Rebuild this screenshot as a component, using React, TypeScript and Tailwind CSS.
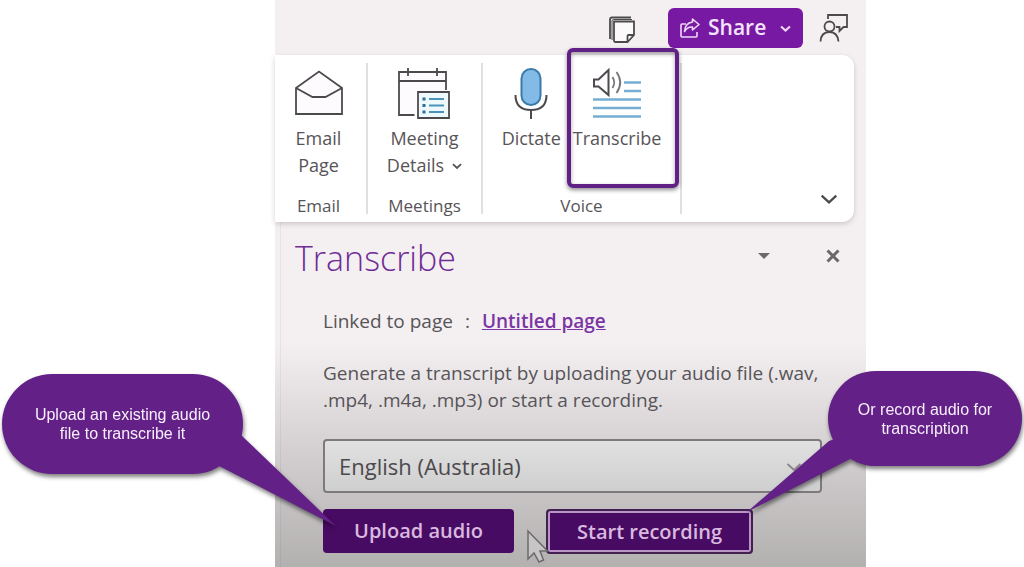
import type { ReactNode } from "react";

function NotesIcon() {
  return (
    <svg width="28" height="28" viewBox="0 0 28 28" fill="none" stroke="#4d4a4d" strokeWidth="1.8">
      <path d="M2 23V3.500Q2 1.500 4 1.500H23" />
      <path d="M4 24V5Q4 3.500 5.500 3.500H24" strokeWidth="1" />
      <path d="M6 5.500H26V19L19.500 26H7.500Q6 26 6 24.500Z" fill="#fbfafb" />
      <path d="M26 19H20.500Q19.500 19 19.500 20V26" />
    </svg>
  );
}

function ShareIcon() {
  return (
    <svg width="20" height="22" viewBox="0 0 20 22" fill="none" stroke="#f0d8f8" strokeWidth="1.6" strokeLinejoin="round">
      <path d="M6 7H2Q1 7 1 8V19Q1 20 2 20H16Q17 20 17 19V15" />
      <path d="M12.500 2L19 7.500L12.500 13V10Q7.500 9.500 4.500 14.500Q5 6 12.500 5Z" />
    </svg>
  );
}

function PersonChatIcon() {
  return (
    <svg width="30" height="30" viewBox="0 0 30 30" fill="none" stroke="#4d4a4d" strokeWidth="1.8">
      <path d="M9 6V2H28V14H24.500L20.500 18V14H17" />
      <circle cx="10.500" cy="13.500" r="5" />
      <path d="M1.500 28.500Q2 19 10.500 19Q18.500 19 19.500 28.500" />
    </svg>
  );
}

function Chevron({ size, color, width = 2 }: { size: number; color: string; width?: number }) {
  return (
    <svg width={size} height={size} viewBox="0 0 16 16" fill="none" stroke={color} strokeWidth={width}>
      <path d="M1.500 5L8 11L14.500 5" />
    </svg>
  );
}

function EnvelopeIcon() {
  return (
    <svg width="50" height="50" viewBox="0 0 50 50" fill="#fdfbfd" stroke="#4d4a4d" strokeWidth="1.8">
      <path d="M2 19L25 2.500L48 19V45H2Z" />
      <path d="M2 19L18.500 28H31.500L48 19" fill="none" />
    </svg>
  );
}

function MeetingIcon() {
  return (
    <svg width="54" height="52" viewBox="0 0 54 52" fill="none" stroke="#4d4a4d" strokeWidth="1.8">
      <path d="M17.500 47H2V4H49V22" fill="#fdfbfd" />
      <path d="M2 13H49M11 0V8M40 0V8" />
      <path d="M21 24H52V50H21Z" fill="#eef9fd" />
      <g stroke="#4b93b8" strokeWidth="2">
        <path d="M32 31H47M32 37.500H47M32 44H47" />
        <path d="M25.500 31H28.500M25.500 37.500H28.500M25.500 44H28.500" stroke="#2f6f93" strokeWidth="3" />
      </g>
    </svg>
  );
}

function MicIcon() {
  return (
    <svg width="34" height="52" viewBox="0 0 34 52" fill="none">
      <rect x="7.500" y="1" width="19" height="36" rx="9.500" fill="#83bbe8" stroke="#3a7ba8" strokeWidth="2" />
      <path d="M1.500 27Q1.500 42 17 42Q32.500 42 32.500 27M17 42V51" stroke="#4d4a4d" strokeWidth="2" />
    </svg>
  );
}

function TranscribeIcon() {
  return (
    <svg width="50" height="52" viewBox="0 0 50 52" fill="none">
      <path d="M2 11.500H6.500L16.500 2V27L6.500 18.500H2Z" fill="#fdfbfd" stroke="#4d4a4d" strokeWidth="2" />
      <path d="M20.500 9Q24 14.500 20.500 20M24.500 4Q32 14.500 24.500 25" stroke="#77757a" strokeWidth="1.8" />
      <path d="M32 14.500H49M32 23H49M1 31.500H49M1 40H49M1 48.500H49" stroke="#74aed3" strokeWidth="2.4" />
    </svg>
  );
}

function RibbonGroup({ label, className, children }: { label: string; className: string; children: ReactNode }) {
  return (
    <div className={`flex flex-col items-center border-r-2 border-[#e2dfe3] ${className}`}>
      <div className="flex grow gap-3 pt-1">{children}</div>
      <div className="text-[17px] leading-4">{label}</div>
    </div>
  );
}

function RibbonButton({ icon, children }: { icon: ReactNode; children: ReactNode }) {
  return (
    <button className="relative flex flex-col items-center text-lg leading-[27px]">
      <span className="mb-1 flex h-[54px] items-center">{icon}</span>
      {children}
    </button>
  );
}

function Callout({ className, bubble, tail, children }: { className: string; bubble: string; tail: string; children: ReactNode }) {
  return (
    <div className={`pointer-events-none absolute z-10 flex items-start drop-shadow-[1px_3px_2px_rgba(0,0,0,0.5)] ${className}`}>
      <svg className="absolute inset-0 h-full w-full" fill="#632187">
        <path d={tail} />
      </svg>
      <p className={`relative flex items-center justify-center rounded-full bg-[#632187] text-center font-['Liberation_Sans',sans-serif] text-base leading-[19px] text-[#f7eefb] ${bubble}`}>
        {children}
      </p>
    </div>
  );
}

export default function App() {
  return (
    <div className="min-h-screen overflow-hidden bg-white pr-[158px] pl-[275px] font-['Open_Sans','Noto_Sans',sans-serif] text-[#575458]">
      <main className="flex min-h-screen flex-col bg-[#f4f0f2]">
        <header className="flex h-[55px] items-center justify-end pt-px pr-[17px]">
          <button aria-label="Notes" className="mr-8 pt-1">
            <NotesIcon />
          </button>
          <button className="mr-4 flex h-10 w-[135px] items-center rounded-md bg-[#7719a3] px-3 text-[21px] font-semibold text-[#f5e3fb]">
            <ShareIcon />
            <span className="mr-auto ml-2">Share</span>
            <Chevron size={11} color="#f0d8f8" width={3} />
          </button>
          <button aria-label="Comments">
            <PersonChatIcon />
          </button>
        </header>

        <section className="relative mr-3 flex h-[167px] rounded-r-xl bg-white shadow-[0_2px_5px_rgba(90,70,90,0.25)]">
          <div className="flex py-2">
            <RibbonGroup label="Email" className="w-[93px] pr-1">
              <RibbonButton icon={<EnvelopeIcon />}>
                <span>Email</span>
                <span>Page</span>
              </RibbonButton>
            </RibbonGroup>
            <RibbonGroup label="Meetings" className="w-[115px]">
              <RibbonButton icon={<MeetingIcon />}>
                <span>Meeting</span>
                <span className="flex items-center gap-2">
                  Details <Chevron size={10} color="#575458" width={3} />
                </span>
              </RibbonButton>
            </RibbonGroup>
            <RibbonGroup label="Voice" className="w-[199px]">
              <RibbonButton icon={<MicIcon />}>Dictate</RibbonButton>
              <RibbonButton icon={<TranscribeIcon />}>
                Transcribe
                <span className="absolute -top-[19px] -right-[18px] -left-[6px] h-[140px] rounded-md border-4 border-[#612085] shadow-[0_2px_4px_rgba(0,0,0,0.45),inset_0_2px_4px_rgba(0,0,0,0.35)]" />
              </RibbonButton>
            </RibbonGroup>
          </div>
          <button aria-label="Collapse ribbon" className="mt-auto mr-4 mb-[14px] ml-auto">
            <Chevron size={18} color="#4d4a4d" />
          </button>
        </section>

        <section className="flex grow bg-linear-to-b from-[#f4f0f2] from-35% via-[#d0cccd] via-70% to-[#b3b0b0]">
          <div className="w-[6px] border-r border-black/5" />
          <div className="grow pt-3 pr-5 pb-3 pl-[14px]">
            <div className="flex items-center">
              <h1 className="mr-auto text-[34px] leading-12 font-light text-[#702b95]">Transcribe</h1>
              <button aria-label="Pane options" className="mr-14 mb-1">
                <svg width="12" height="8" viewBox="0 0 12 8" fill="#6b686b">
                  <path d="M0 1H12L6 7Z" />
                </svg>
              </button>
              <button aria-label="Close" className="mr-[6px] mb-1">
                <svg width="14" height="14" viewBox="0 0 14 14" stroke="#6b686b" strokeWidth="3">
                  <path d="M1.500 1.500L12.500 12.500M12.500 1.500L1.500 12.500" />
                </svg>
              </button>
            </div>

            <div className="pt-[25px] pr-6 pl-7">
              <p className="text-[19px] leading-7">
                Linked to page
                <span className="mx-3">:</span>
                <a href="#page" className="font-semibold text-[#7b35a5] underline">Untitled page</a>
              </p>
              <p className="mt-[25px] text-[19px] leading-[27px]">
                Generate a transcript by uploading your audio file (.wav,
                <br />
                .mp4, .m4a, .mp3) or start a recording.
              </p>

              <div className="relative mt-[25px]">
                <select
                  aria-label="Language"
                  className="block h-[54px] w-full appearance-none rounded-sm border-2 border-[#7c7a7c] bg-linear-to-b from-[#e1e1e1] to-[#cfcfcf] px-[14px] text-[22px] text-[#4c494d]"
                >
                  <option>English (Australia)</option>
                </select>
                <span className="pointer-events-none absolute top-5 right-5">
                  <Chevron size={16} color="#8b888b" />
                </span>
              </div>

              <div className="mt-4 flex gap-8">
                <div className="relative">
                  <button className="h-11 w-[191px] rounded-sm bg-[#480b63] text-xl font-semibold text-[#d9b9df]">Upload audio</button>
                  <Callout className="top-[-135px] left-[-321px] h-[152px] w-[334px]" bubble="h-[100px] w-[241px]" tail="M239 61L334 152L217 92Z">
                    Upload an existing audio
                    <br />
                    file to transcribe it
                  </Callout>
                </div>
                <div className="relative">
                  <button className="h-[45px] w-[207px] rounded-sm border-2 border-[#432052] bg-[#480b63] text-xl font-semibold text-[#d9b9df] ring-2 ring-[#b995c4] ring-inset">
                    Start recording
                  </button>
                  <svg className="absolute top-5 -left-5" width="24" height="36" viewBox="0 0 24 36" fill="#c8c5c6" stroke="#6b696b" strokeWidth="1.5">
                    <path d="M2 2V30L8 24L13 33L17.500 31L14 22H21.500Z" />
                  </svg>
                  <Callout className="top-[-138px] left-[201px] h-[141px] w-[275px] justify-end" bubble="h-[95px] w-[194px]" tail="M82 70L0 141L105 87L110 60Z">
                    Or record audio for
                    <br />
                    transcription
                  </Callout>
                </div>
              </div>
            </div>
          </div>
        </section>
      </main>
    </div>
  );
}
